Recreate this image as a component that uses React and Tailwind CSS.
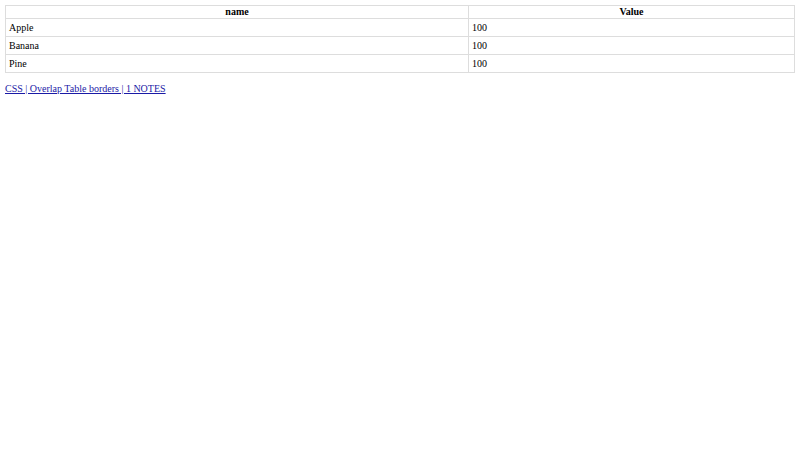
import React from "react";

const rows = [
  { name: "Apple", value: "100" },
  { name: "Banana", value: "100" },
  { name: "Pine", value: "100" },
];

export default function App() {
  return (
    <div className="min-h-[450px] bg-white p-[5px] font-['Liberation_Serif',serif] text-[10px] text-black">
      <table className="w-[790px] border-collapse border border-[#dddddd]">
        <thead>
          <tr>
            <th className="w-[463px] border border-[#dddddd] p-0 text-center font-bold leading-[12px]">
              name
            </th>
            <th className="border border-[#dddddd] p-0 text-center font-bold leading-[12px]">
              Value
            </th>
          </tr>
        </thead>
        <tbody>
          {rows.map((row) => (
            <tr key={row.name}>
              <td className="border border-[#dddddd] px-[3px] py-[2px] leading-[13px]">{row.name}</td>
              <td className="border border-[#dddddd] px-[3px] py-[2px] leading-[13px]">{row.value}</td>
            </tr>
          ))}
        </tbody>
      </table>

      <div className="mt-[10px] leading-[12px]">
        <a href="#" className="text-[#1a1aa6] underline">
          CSS | Overlap Table borders | 1 NOTES
        </a>
      </div>
    </div>
  );
}
